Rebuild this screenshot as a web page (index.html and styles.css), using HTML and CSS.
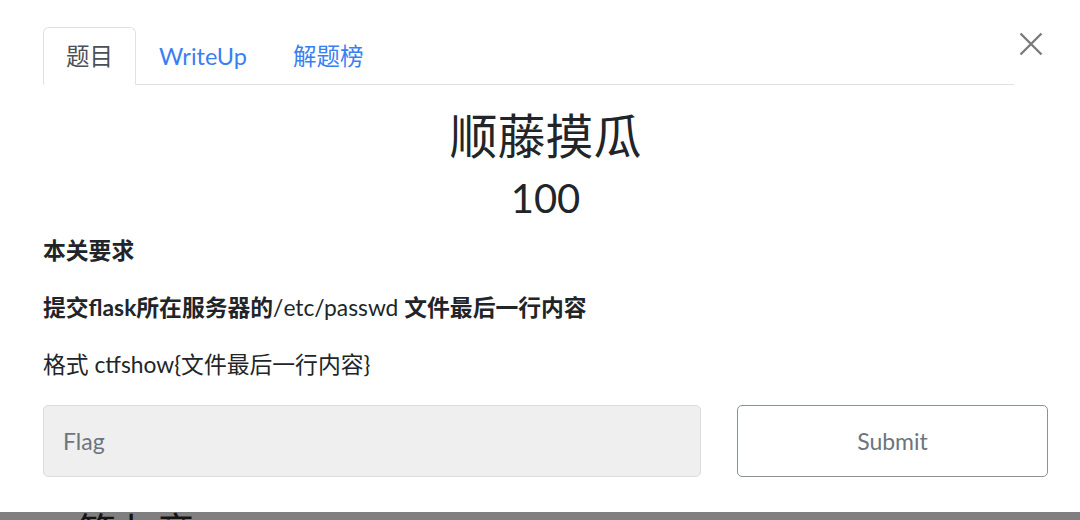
FILE: index.html
```html
<!DOCTYPE html>
<html lang="zh-CN">
<head>
    <meta charset="UTF-8">
    <meta name="viewport" content="width=device-width, initial-scale=1.0">
    <title>顺藤摸瓜</title>
    <link rel="stylesheet" href="styles.css">
</head>
<body>
    <div class="modal">
        <div class="modal-head">
            <ul class="nav-tabs">
                <li class="nav-item"><a class="nav-link active" href="#">题目</a></li>
                <li class="nav-item"><a class="nav-link" href="#">WriteUp</a></li>
                <li class="nav-item"><a class="nav-link" href="#">解题榜</a></li>
            </ul>
            <button class="close" aria-label="Close">
                <svg width="24" height="24" viewBox="0 0 24 24">
                    <path d="M1.5 1.5 L22.5 22.5 M22.5 1.5 L1.5 22.5" stroke="#7b7b7b" stroke-width="2.4" fill="none"/>
                </svg>
            </button>
        </div>

        <div class="challenge">
            <h2 class="challenge-name">顺藤摸瓜</h2>
            <h3 class="challenge-value">100</h3>
            <div class="challenge-desc">
                <p><strong>本关要求</strong></p>
                <p><strong>提交flask所在服务器的</strong>/etc/passwd <strong>文件最后一行内容</strong></p>
                <p>格式 ctfshow{文件最后一行内容}</p>
            </div>
            <div class="submit-row">
                <input type="text" class="flag-input" placeholder="Flag">
                <button class="submit-btn">Submit</button>
            </div>
        </div>
    </div>
    <div class="page-behind"><span>第七章</span></div>
</body>
</html>
```

FILE: styles.css
```css
body {
    margin: 0;
    background-color: #7f7f7f;
    font-family: Lato, "Noto Sans CJK SC", sans-serif;
    color: #212529;
}

.modal {
    background-color: #fff;
    height: 512px;
    padding: 27px 32px 0 43px;
    box-sizing: border-box;
}

.modal-head {
    display: flex;
    align-items: flex-start;
}

.nav-tabs {
    flex: 1;
    display: flex;
    list-style: none;
    margin: 0;
    padding: 0;
    border-bottom: 1px solid #dee2e6;
}

.nav-item {
    margin-bottom: -1px;
}

.nav-link {
    display: block;
    padding: 10.5px 22px;
    font-size: 23.5px;
    line-height: 1.5;
    color: #3a7ff2;
    text-decoration: none;
    border: 1px solid transparent;
    border-top-left-radius: 6px;
    border-top-right-radius: 6px;
}

.nav-link.active {
    color: #495057;
    border-color: #dee2e6 #dee2e6 #fff;
    background-color: #fff;
}

.close {
    width: 34px;
    height: 30px;
    margin-top: 2px;
    padding: 0;
    border: none;
    background: none;
    display: flex;
    justify-content: center;
    align-items: center;
    cursor: pointer;
}

.challenge-name {
    margin: 22px 0 0;
    text-align: center;
    font-size: 48px;
    font-weight: 400;
    line-height: 1.2;
}

.challenge-value {
    margin: 9px 0 0;
    text-align: center;
    font-size: 40px;
    font-weight: 400;
    line-height: 1.2;
}

.challenge-desc {
    margin-top: 11px;
}

.challenge-desc p {
    margin: 0 0 23px;
    font-size: 22.8px;
    line-height: 1.5;
}

.challenge-desc p:last-child {
    margin-bottom: 24px;
}

.submit-row {
    display: grid;
    grid-template-columns: 658px 1fr;
    gap: 36px;
}

.flag-input {
    height: 72px;
    padding: 0 19px;
    box-sizing: border-box;
    font-family: Lato, sans-serif;
    font-size: 23px;
    color: #495057;
    background-color: #efefef;
    border: 1px solid #dcdcdc;
    border-radius: 5px;
}

.flag-input::placeholder {
    color: #6c757d;
}

.submit-btn {
    height: 72px;
    font-family: Lato, sans-serif;
    font-size: 23px;
    color: #6c757d;
    background-color: #fff;
    border: 1px solid #8c9196;
    border-radius: 5px;
    cursor: pointer;
}

.page-behind {
    height: 8px;
    overflow: hidden;
    padding-left: 76px;
}

.page-behind span {
    display: block;
    margin-top: -2px;
    font-family: "Noto Sans CJK SC", sans-serif;
    font-size: 40px;
    line-height: 40px;
    color: #141414;
}
```
